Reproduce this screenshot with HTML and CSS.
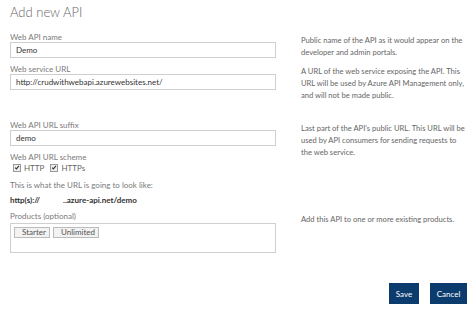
FILE: index.html
```html
<!DOCTYPE html>
<html>
<head>
<meta charset="utf-8">
<link rel="stylesheet" href="styles.css">
</head>
<body>
<div class="page">
  <h1 class="title">Add new API</h1>

  <div class="columns">
    <div class="form-col">
      <div class="group g-name">
        <div class="label">Web API name</div>
        <div class="input">Demo</div>
      </div>
      <div class="group g-url">
        <div class="label">Web service URL</div>
        <div class="input">http://crudwithwebapi.azurewebsites.net/</div>
      </div>
      <div class="group g-suffix">
        <div class="label">Web API URL suffix</div>
        <div class="input">demo</div>
      </div>
      <div class="group g-scheme">
        <div class="label">Web API URL scheme</div>
        <div class="checks">
          <span class="check"><span class="box"><svg viewBox="0 0 8 8" width="7" height="7"><path d="M1.5 4.2 L3.2 5.9 L6.6 1.8" fill="none" stroke="#333" stroke-width="1.4"/></svg></span>HTTP</span>
          <span class="check"><span class="box"><svg viewBox="0 0 8 8" width="7" height="7"><path d="M1.5 4.2 L3.2 5.9 L6.6 1.8" fill="none" stroke="#333" stroke-width="1.4"/></svg></span>HTTPs</span>
        </div>
        <div class="label hint">This is what the URL is going to look like:</div>
        <div class="preview"><span class="scheme">http(s)://</span><span class="host">..azure-api.net/demo</span></div>
      </div>
      <div class="group g-products">
        <div class="label">Products (optional)</div>
        <div class="products">
          <span class="tag">Starter</span><span class="tag">Unlimited</span>
        </div>
      </div>
    </div>

    <div class="desc-col">
      <div class="desc d-name">Public name of the API as it would appear on the<br>developer and admin portals.</div>
      <div class="desc d-url">A URL of the web service exposing the API. This<br>URL will be used by Azure API Management only,<br>and will not be made public.</div>
      <div class="desc d-suffix">Last part of the API's public URL. This URL will be<br>used by API consumers for sending requests to<br>the web service.</div>
      <div class="desc d-products">Add this API to one or more existing products.</div>
    </div>
  </div>

  <div class="actions">
    <button class="btn btn-save">Save</button>
    <button class="btn btn-cancel">Cancel</button>
  </div>
</div>
</body>
</html>
```

FILE: styles.css
```css
html, body {
  margin: 0;
  padding: 0;
  background: #ffffff;
}
body {
  font-family: "Lato", "Open Sans", sans-serif;
  font-size: 8px;
  color: #444;
}
.page {
  padding: 4px 7px 0 10px;
}
.title {
  margin: 0 0 12px 0;
  font-size: 13px;
  line-height: 16px;
  font-weight: 300;
  color: #666;
}
.columns {
  display: flex;
  align-items: flex-start;
  gap: 25px;
}
.form-col {
  width: 266px;
  flex: none;
}
.desc-col {
  flex: none;
}
.desc {
  font-size: 7.6px;
  line-height: 12px;
  white-space: nowrap;
  color: #666;
}
.d-name { margin-top: 2px; }
.d-url { margin-top: 7px; }
.d-suffix { margin-top: 21px; }
.d-products { margin-top: 55px; }

.label {
  line-height: 10px;
  color: #7a7a7a;
}
.input {
  box-sizing: border-box;
  height: 16px;
  border: 1px solid #cfcfcf;
  padding: 0 5px;
  line-height: 14px;
  color: #333;
}
.g-url { margin-top: 6px; }
.g-suffix { margin-top: 30px; }
.g-scheme { margin-top: 6px; }
.g-products { margin-top: 6px; }

.checks {
  display: flex;
  gap: 6px;
  height: 11px;
  align-items: center;
  padding-left: 3px;
  color: #666;
}
.check {
  display: inline-flex;
  align-items: center;
  gap: 3px;
}
.box {
  display: inline-flex;
  width: 6px;
  height: 6px;
  border: 1px solid #999;
  background: #eee;
  align-items: center;
  justify-content: center;
}
.hint {
  margin-top: 7px;
}
.preview {
  margin-top: 5px;
  line-height: 10px;
  font-weight: bold;
  color: #333;
}
.scheme {
  display: inline-block;
  width: 53px;
}
.products {
  box-sizing: border-box;
  height: 30px;
  margin-top: 2px;
  border: 1px solid #cfcfcf;
  padding: 3px 3px;
  display: flex;
  align-items: flex-start;
  gap: 3px;
}
.tag {
  box-sizing: border-box;
  height: 11px;
  line-height: 9px;
  border: 1px solid #bbb;
  background: #f2f2f2;
  padding: 0 3px 0 7px;
  color: #555;
}
.actions {
  display: flex;
  justify-content: flex-end;
  gap: 11px;
  margin-top: 30px;
}
.btn {
  height: 21px;
  border: none;
  background: #0c3c6e;
  color: #fff;
  font-family: inherit;
  font-size: 8px;
  padding: 0;
}
.btn-save { width: 30px; }
.btn-cancel { width: 37px; }
```
